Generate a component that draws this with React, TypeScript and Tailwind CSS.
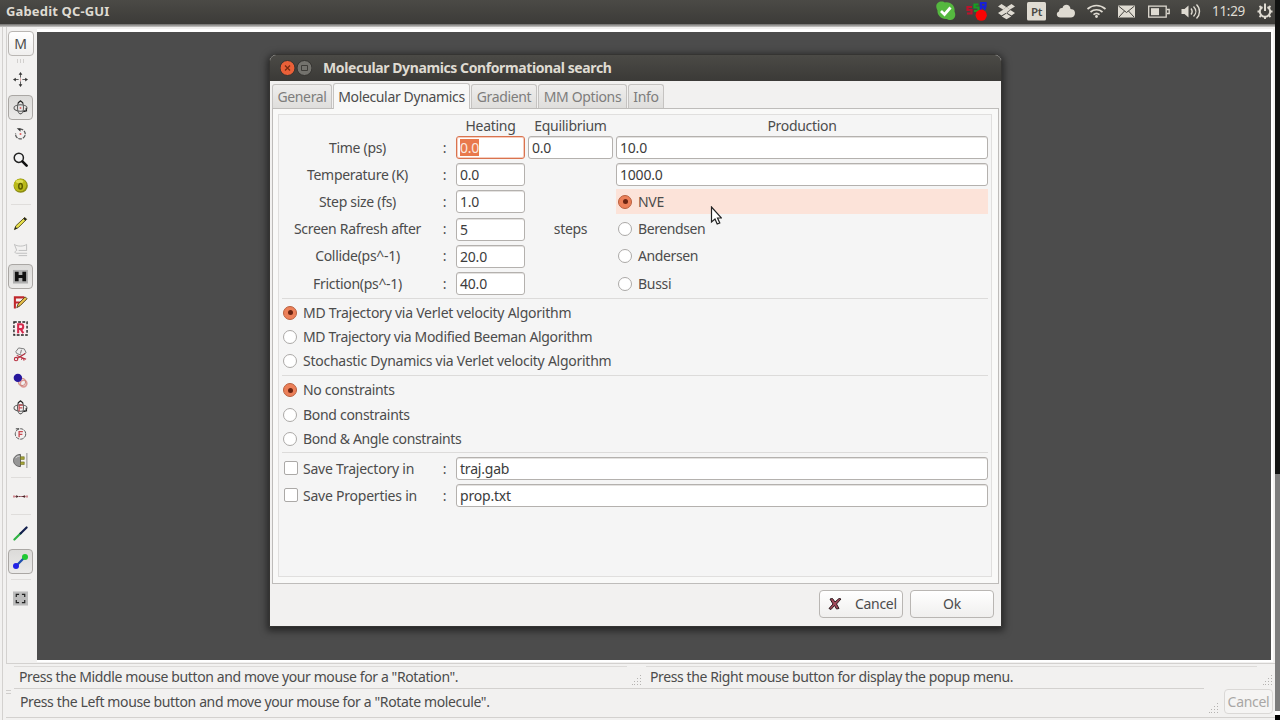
import type { ReactNode } from 'react'
import clsx from 'clsx'

type ToolItem = {
  id: string
  box: string
  pressed?: boolean
  icon: ReactNode
}

const Orbit = () => (
  <g fill="none" stroke="#5a5a5a" strokeWidth="1.1">
    <ellipse cx="8" cy="8.5" rx="7" ry="3.4" />
    <ellipse cx="8" cy="8" rx="3.2" ry="6.8" />
    <path d="M5 3.7 8 1l3 2.7M11 12.5l3.5-1-.6-3" stroke="#222" />
  </g>
)

const tools: ToolItem[] = [
  {
    id: 'move',
    box: 'h-[26px]',
    icon: (
      <g stroke="#555" fill="#333" strokeWidth="1">
        <path d="M8 2v4M8 10v4M2 8h4M10 8h4" />
        <path stroke="none" d="M8 0l2 3H6zM8 16l2-3H6zM0 8l3-2v4zM16 8l-3-2v4z" />
        <path d="M8 6.5v3" stroke="#d9a0a0" />
      </g>
    ),
  },
  {
    id: 'rotate-molecule',
    box: 'mt-[2px] h-[26px]',
    pressed: true,
    icon: (
      <>
        <Orbit />
        <circle cx="8" cy="8.5" r="1" fill="#e06060" />
      </>
    ),
  },
  {
    id: 'rotate-z',
    box: 'h-[26px]',
    icon: (
      <>
        <path d="M7 3.5a5.2 5.2 0 1 1-4.2 4" fill="none" stroke="#555" strokeWidth="1.3" strokeDasharray="4 1" />
        <path d="M4 2.5h4v3.5z" fill="#333" />
        <circle cx="8" cy="8.5" r="1.1" fill="#e06060" />
      </>
    ),
  },
  {
    id: 'zoom',
    box: 'h-[26px]',
    icon: (
      <>
        <circle cx="6.2" cy="6.2" r="4.9" fill="#f3f3f3" stroke="#222" strokeWidth="1.6" />
        <path d="M10 10l4.5 4.5" stroke="#111" strokeWidth="2.8" strokeLinecap="round" />
      </>
    ),
  },
  {
    id: 'zero',
    box: 'h-[27px]',
    icon: (
      <>
        <circle cx="8.2" cy="8.2" r="7.6" fill="#8b8b12" />
        <circle cx="7.6" cy="7.4" r="6.7" fill="#b9b91a" />
        <ellipse cx="7" cy="3.6" rx="4" ry="1.8" fill="#dede55" />
        <ellipse cx="8" cy="8.8" rx="1.9" ry="3" fill="none" stroke="#5d5d00" strokeWidth="1.6" />
      </>
    ),
  },
  { id: 'sep-1', box: 'h-[11px]', icon: null },
  {
    id: 'edit',
    box: 'h-[26px]',
    icon: (
      <>
        <path d="M1.5 14.5l1.5-4L12.5 1.5l2 2-9 9z" fill="#e8e04a" stroke="#55501e" />
        <path d="M1.5 14.5l1.2-3 1.8 1.8zM12.5 1.5l2 2-1.5 1.5-2-2z" fill="#222" />
      </>
    ),
  },
  {
    id: 'bonds',
    box: 'h-[26px]',
    icon: (
      <path
        d="M1.5 2.5c3 2.5 10 2.5 13 0v6M1.5 2.5L4 9M4 9c-2.5 1-2.5 3 0 3h11M6 9h9M6 14.5h9"
        fill="none"
        stroke="#bdbdbd"
      />
    ),
  },
  {
    id: 'hydrogen',
    box: 'mt-px h-[26px]',
    pressed: true,
    icon: (
      <>
        <path d="M0 1h16v14.5H0z" fill="#b0b0b0" />
        <path d="M2 3h4v3.5h4V3h4v10h-4V9.500H6V13H2z" fill="#111" />
      </>
    ),
  },
  {
    id: 'edit-fragment',
    box: 'h-[26px]',
    icon: (
      <>
        <path d="M2 14.5V2.5H12M2.5 8H8" fill="none" stroke="#c0282c" strokeWidth="2.2" />
        <path d="M4 13.5l1.5-4L13 2l2 2-7.5 7.5z" fill="#e8c24a" stroke="#55401e" />
      </>
    ),
  },
  {
    id: 'select-residue',
    box: 'h-[26px]',
    icon: (
      <>
        <rect x="1" y="1" width="14" height="14" fill="#fbeef0" stroke="#222" strokeWidth="1.5" strokeDasharray="3 1.5" />
        <path d="M5.5 13V3.5h3c3.2 0 3.2 5 0 5h-3M8 8.5l3 4.5" fill="none" stroke="#d42a4c" strokeWidth="2.2" />
      </>
    ),
  },
  {
    id: 'cut',
    box: 'h-[26px]',
    icon: (
      <>
        <path d="M3 5l3-4 6 1 2 4-4 3-6-2zM9 3l-1 4" fill="#eee" stroke="#777" />
        <path
          d="M1.5 13c0-2.500 3.500-2.500 3.500 0s-3.500 2-3.500 0M5 12l8-5M9 13.500c0-2.500 3.500-1.500 2.500 1M4 9l10 4"
          fill="none"
          stroke="#b83040"
          strokeWidth="1.2"
        />
      </>
    ),
  },
  {
    id: 'atoms',
    box: 'h-[27px]',
    icon: (
      <>
        <circle cx="11.2" cy="11.2" r="3.5" fill="none" stroke="#dd9a96" strokeWidth="1.8" />
        <circle cx="9.5" cy="9.5" r="4" fill="none" stroke="#c98078" />
        <circle cx="5.2" cy="5.2" r="4.5" fill="#27179c" />
      </>
    ),
  },
  {
    id: 'rotate-fragment',
    box: 'h-[26px]',
    icon: (
      <>
        <Orbit />
        <path d="M6.5 12V5.5H10.5M6.5 8.5h3.5" fill="none" stroke="#c74a50" strokeWidth="1.3" />
      </>
    ),
  },
  {
    id: 'rotate-fragment-z',
    box: 'h-[26px]',
    icon: (
      <>
        <circle cx="8" cy="8.5" r="5.6" fill="none" stroke="#555" strokeDasharray="4 1" />
        <path d="M3 3h3.5" stroke="#333" />
        <path d="M6.5 12V6H10.5M6.5 9h3.5" fill="none" stroke="#c74a50" strokeWidth="1.4" />
      </>
    ),
  },
  {
    id: 'plug',
    box: 'mt-px h-[26px]',
    icon: (
      <>
        <path d="M8 1.5C3 1.5.5 5 .5 8s2.5 6.5 7.5 6.5z" fill="#969696" stroke="#5e5e5e" />
        <path d="M3 5.5c1-1.5 2-2 4-2" stroke="#ddd" fill="none" />
        <path d="M8 4h4v2.8H8zM8 9.5h4v2.8H8z" fill="#a6a638" stroke="#66661c" strokeWidth=".6" />
        <path d="M14.8 0v16" stroke="#8a8a8a" />
      </>
    ),
  },
  { id: 'sep-2', box: 'h-[9px]', icon: null },
  {
    id: 'distance',
    box: 'mt-px h-[26px]',
    icon: (
      <>
        <path d="M1 8h14" stroke="#7b3040" strokeDasharray="2 .6" />
        <path d="M0 7h2.500v2H0zM13.500 7H16v2h-2.500z" fill="#d08a90" />
        <path d="M6 8L3.500 6.500v3zM10 8l2.500-1.500v3z" fill="#442222" />
      </>
    ),
  },
  { id: 'sep-3', box: 'h-[11px]', icon: null },
  {
    id: 'stick',
    box: 'h-[26px]',
    icon: (
      <>
        <path d="M1.5 14.5L8.5 7.5" stroke="#2fb344" strokeWidth="2.3" strokeLinecap="round" />
        <path d="M8 8l6.5-6.5" stroke="#14204e" strokeWidth="2.3" strokeLinecap="round" />
      </>
    ),
  },
  {
    id: 'ball-stick',
    box: 'mt-[2px] h-[26px]',
    pressed: true,
    icon: (
      <>
        <path d="M3.5 12.5l9-9" stroke="#1f4fae" strokeWidth="2.4" />
        <circle cx="3.2" cy="12.8" r="3.2" fill="#2222e6" />
        <circle cx="12.8" cy="3.2" r="3.2" fill="#1ec832" />
      </>
    ),
  },
  { id: 'sep-4', box: 'h-[10px]', icon: null },
  {
    id: 'fullscreen',
    box: 'mt-px h-[26px]',
    icon: (
      <>
        <path d="M0 .5h16v15H0z" fill="#bcbcbc" />
        <path d="M3.5 6.500v-3h3M9.500 3.500h3v3M12.500 9.500v3h-3M6.500 12.500h-3v-3" fill="none" stroke="#222" strokeWidth="1.3" />
      </>
    ),
  },
]

const raised = 'border border-[#b9b6b3] bg-gradient-to-b from-white to-[#f0efee] rounded-[4px]'

const Toolbar = () => (
  <div className="flex w-[27px] flex-col items-center pt-[4px]">
    <div className={clsx(raised, 'flex h-[25px] w-[26px] items-center justify-center text-[14px]')}>M</div>
    <div className="flex h-[10px] items-center gap-[2px]">
      <i className="h-1 w-px bg-[#d2d0ce]" />
      <i className="h-1 w-px bg-[#d2d0ce]" />
      <i className="h-1 w-px bg-[#d2d0ce]" />
    </div>
    {tools.map((tool) => (
      <div key={tool.id} className={clsx('flex w-full shrink-0 items-center justify-center', tool.box)}>
        {tool.icon ? (
          <div
            className={clsx(
              'flex size-[25px] items-center justify-center',
              tool.pressed && 'rounded-[4px] border border-[#aaa7a4] bg-gradient-to-b from-[#dcdbd9] to-[#ebeae9]',
            )}
          >
            <svg viewBox="0 0 16 16" className="size-[15px] shrink-0">
              {tool.icon}
            </svg>
          </div>
        ) : (
          <div className="h-px w-5 bg-[#dfdddb]" />
        )}
      </div>
    ))}
  </div>
)

const TopBar = () => (
  <header className="flex h-[24px] shrink-0 items-center justify-between bg-gradient-to-b from-[#4b4a46] to-[#3c3b38] pl-[6px] text-[#dfdbd2]">
    <span className="pb-[2px] text-[13px] font-bold tracking-[0.15px]">Gabedit QC-GUI</span>
    <svg viewBox="0 0 340 24" className="h-[24px] w-[340px]">
      <path
        d="M3 2.5c3-1 5 0 6 .5 6-1 10.5 4 9.5 9 2 4 0 8.5-4 8.5-2 0-3-.5-4-1-5 .5-9.5-4-9-8.500C-.5 7 0 4 3 2.5z"
        transform="translate(1 -.5)"
        fill="#55b83f"
      />
      <path d="M6 11l3.5 3.500L15.500 7.500" fill="none" stroke="#fff" strokeWidth="2.8" />
      <g transform="translate(5 0)">
        <g fill="none" strokeWidth="2.2">
          <path d="M32 7h-4.500v3H31.500v3.500h-4.500" stroke="#b9142c" />
          <path d="M38.500 4.500H34.500v3h4V11h-4.500" stroke="#16a022" />
          <path d="M41 10V3h4.500v3.500h-4M43 6.500l2.500 3" stroke="#1820d8" />
        </g>
        <circle cx="41.200" cy="15.200" r="5.600" fill="#fa0404" />
        <path
          d="M61.500 4l4.700 2.900-3.200 2.700L58 6.600zM71.500 4l-4.700 2.900 3.200 2.700 5-3zM58 13l5-3.300 3.500 2.900-5 3zM75 13l-5-3.300-3.500 2.900 5 3zM61.800 16.500l4.700-3 4.700 3-4.700 2.800zM62.500 10l4-3 4 3-4 3.500z"
          fill="#dfdbd2"
        />
        <rect x="87" y="2" width="19" height="18.500" rx="1.500" fill="#dfdbd2" />
        <text x="96.500" y="15.500" textAnchor="middle" fontSize="11.500" fontWeight="600" fill="#4a4944">Pt</text>
        <path
          d="M121.500 17.500c-4.300 0-4.800-5-1.500-6 0-3 2-4 3.500-3.500 1-5 8-4 8 1 4 0 5 3 4.300 5.500-.5 2-2 3-3.800 3z"
          transform="translate(-1 0)"
          fill="#dfdbd2"
        />
        <g fill="none" stroke="#dfdbd2" strokeWidth="1.7">
          <path d="M147.500 9c5.500-4.700 12.500-4.700 18 0M150.500 12c3.500-3 8.500-3 12 0M153.500 14.700c2-1.700 4-1.700 6 0" />
        </g>
        <circle cx="156.500" cy="16.500" r="1.400" fill="#dfdbd2" />
        <rect x="178" y="5.500" width="17" height="12" fill="#dfdbd2" />
        <path d="M178.500 6l8 6.500 8-6.500M179 17l5.500-6M194 17l-5.500-6" fill="none" stroke="#45443f" />
        <path d="M208.700 6.200h17.500v11h-17.500zM227 9.500h2.200v4H227" fill="none" stroke="#dfdbd2" strokeWidth="1.3" />
        <path d="M211 8.200h8v7h-8z" fill="#dfdbd2" />
        <path d="M241.500 9h3l4-3.500v12l-4-3.500h-3z" fill="#dfdbd2" />
        <path d="M251 8.500c1.500 2 1.500 4 0 6M253.500 6.500c3 3 3 7 0 10M256.500 4.500c4 4 4 10 0 14" fill="none" stroke="#dfdbd2" strokeWidth="1.4" />
        <text x="272" y="16" fontSize="13.500" textLength="33" fill="#dfdbd2">11:29</text>
        <g fill="none" stroke="#dfdbd2">
          <path d="M322.500 7a5.200 5.200 0 1 0 5 0" strokeWidth="2" />
          <path d="M325 3.500v7.500" strokeWidth="2" />
          <path
            d="M317.500 11.500h2.500M330 11.500h2.500M319.500 6l1.800 1.800M330.500 6l-1.800 1.800M319.500 17l1.800-1.800M330.500 17l-1.800-1.800M325 16.500V19"
            strokeWidth="1.9"
          />
        </g>
      </g>
    </svg>
  </header>
)

const Entry = ({ value, selected = false }: { value: string; selected?: boolean }) => (
  <div
    className={clsx(
      'flex h-[23px] w-full items-center rounded-[3px] border bg-white px-[3px] text-[#3c3c3c]',
      selected ? 'border-[#d9734f] shadow-[inset_0_0_0_1px_#f6cdbd]' : 'border-[#b4b1ae] shadow-[inset_0_1px_0_#e4e2e0]',
    )}
  >
    <span className={clsx('leading-[17px] tracking-[-0.2px]', selected && 'bg-[#e9794c] text-[#fbe8df]')}>{value}</span>
  </div>
)

const Radio = ({ label, checked = false, className }: { label: string; checked?: boolean; className?: string }) => (
  <div className={clsx('flex items-center gap-[6px]', className)}>
    <span
      className={clsx(
        'flex size-[14px] shrink-0 items-center justify-center rounded-full border',
        checked ? 'border-[#b9603f] bg-[#ec8059]' : 'border-[#aba9a7] bg-white',
      )}
    >
      {checked && <span className="size-[5px] rounded-full bg-[#6b2412]" />}
    </span>
    <span className="whitespace-nowrap">{label}</span>
  </div>
)

const Checkbox = ({ label }: { label: string }) => (
  <div className="flex items-center gap-[5px] pl-[2px]">
    <span className="mb-px size-[14px] shrink-0 rounded-[2px] border border-[#aba9a7] bg-white" />
    <span className="tracking-[-0.23px] whitespace-nowrap">{label}</span>
  </div>
)

const Rule = () => <div className="h-px shrink-0 bg-[#dcdbda]" />

const rows = [
  { label: 'Time (ps)', heating: '0.0' },
  { label: 'Temperature (K)', heating: '0.0' },
  { label: 'Step size (fs)', heating: '1.0' },
  { label: 'Screen Rafresh after', heating: '5' },
  { label: 'Collide(ps^-1)', heating: '20.0' },
  { label: 'Friction(ps^-1)', heating: '40.0' },
]

const middle: ReactNode[] = [<Entry value="0.0" />, null, null, 'steps', null, null]

const production: ReactNode[] = [
  <Entry value="10.0" />,
  <Entry value="1000.0" />,
  <Radio label="NVE" checked className="h-[25px] w-full bg-[#fce3d9] pl-[2px]" />,
  <Radio label="Berendsen" className="w-full pl-[2px] tracking-[-0.4px]" />,
  <Radio label="Andersen" className="w-full pl-[2px] tracking-[-0.4px]" />,
  <Radio label="Bussi" className="w-full pl-[2px]" />,
]

const cols = 'grid grid-cols-[151px_17px_69px_85px_372px] gap-x-[3px] items-center justify-items-center'

const tabs = [
  { label: 'General', width: 'w-[60px]' },
  { label: 'Molecular Dynamics', width: 'w-[137px]', active: true },
  { label: 'Gradient', width: 'w-[66px]' },
  { label: 'MM Options', width: 'w-[89px]' },
  { label: 'Info', width: 'w-[36px]' },
]

const Dialog = () => (
  <div className="absolute top-[54px] left-[269px] flex h-[573px] w-[733px] flex-col rounded-t-[7px] border border-[#353432] bg-[#f2f1f0] shadow-[0_2px_7px_2px_rgba(0,0,0,0.5)]">
    <div className="flex h-[26px] shrink-0 items-center rounded-t-[6px] bg-gradient-to-b from-[#4b4a46] to-[#3b3a37] pl-[10px] text-[#dfdbd2]">
      <svg viewBox="0 0 32 16" className="h-[16px] w-[32px]">
        <circle cx="7.5" cy="8" r="7.5" fill="#ea6038" stroke="#33322f" />
        <path d="M5 5.5l5 5M10 5.500l-5 5" stroke="#7c2b10" strokeWidth="1.3" />
        <circle cx="24.5" cy="8" r="7.5" fill="#73726d" stroke="#33322f" />
        <path d="M21.500 5.500h6v5h-6z" fill="none" stroke="#3e3d39" />
      </svg>
      <span className="ml-[11px] pb-px text-[14px] font-bold tracking-[-0.4px]">Molecular Dynamics Conformational search</span>
    </div>

    <div className="flex h-[27px] shrink-0 items-end gap-px px-[2px]">
      {tabs.map((tab) => (
        <div
          key={tab.label}
          className={clsx(
            'z-10 flex items-center justify-center rounded-t-[3px] border border-[#c5c3c1] tracking-[-0.35px] whitespace-nowrap',
            tab.width,
            tab.active
              ? '-mb-px h-[26px] border-b-0 bg-[#f8f8f7]'
              : 'h-[24px] border-b-0 bg-gradient-to-b from-[#efeeed] to-[#dfdedc] pt-px text-[#7e7d7c]',
          )}
        >
          {tab.label}
        </div>
      ))}
    </div>

    <div className="ml-[2px] flex h-[476px] w-[727px] shrink-0 border border-[#bebcba] bg-[#f9f9f8] pt-[5px] pr-[6px] pb-[6px] pl-[5px]">
      <div className="flex grow flex-col border border-[#e0dfde] bg-[#f5f5f5] px-[3px]">
        <div className={clsx(cols, 'h-[19px] pt-[2px]')}>
          <span />
          <span />
          <span>Heating</span>
          <span>Equilibrium</span>
          <span>Production</span>
        </div>
        {rows.map((row, i) => (
          <div key={row.label} className={clsx(cols, 'h-[27.2px]')}>
            <span>{row.label}</span>
            <span>:</span>
            <Entry value={row.heating} selected={i === 0} />
            <div className="flex w-full justify-center">{middle[i]}</div>
            {production[i]}
          </div>
        ))}

        <div className="mt-px shrink-0">
          <Rule />
        </div>
        <div className="flex h-[76px] flex-col pt-[1.5px] pl-px">
          <Radio className="h-[24.3px] tracking-[-0.24px]" label="MD Trajectory via Verlet velocity Algorithm" checked />
          <Radio className="h-[24.3px] tracking-[-0.33px]" label="MD Trajectory via Modified Beeman Algorithm" />
          <Radio className="h-[24.3px] tracking-[-0.26px]" label="Stochastic Dynamics via Verlet velocity Algorithm" />
        </div>
        <Rule />
        <div className="flex h-[76px] flex-col pt-[2px] pl-px">
          <Radio className="h-[24.3px]" label="No constraints" checked />
          <Radio className="h-[24.3px]" label="Bond constraints" />
          <Radio className="h-[24.3px] tracking-[-0.35px]" label="Bond & Angle constraints" />
        </div>
        <Rule />
        <div className="flex flex-col pt-[2px]">
          {[
            ['Save Trajectory in', 'traj.gab'],
            ['Save Properties in', 'prop.txt'],
          ].map(([label, value]) => (
            <div key={label} className="grid h-[27.2px] grid-cols-[151px_17px_532px] items-center gap-x-[3px]">
              <Checkbox label={label} />
              <span className="text-center">:</span>
              <Entry value={value} />
            </div>
          ))}
        </div>
      </div>
    </div>

    <div className="flex grow items-center justify-end gap-[7px] pr-[7px] pb-[2px]">
      <button type="button" className={clsx(raised, 'flex h-[28px] w-[84px] items-center pl-[8px]')}>
        <svg viewBox="0 0 14 14" className="size-[14px]">
          <path d="M2 2l2.5-.5L7 5l4-3.500 2 .5L8.500 7l2.500 4.500-2.500.5-2-3.500-3.500 4-2-1L5 7z" fill="#a34a5c" stroke="#2c1a1e" />
        </svg>
        <span className="ml-[13px]">Cancel</span>
      </button>
      <button type="button" className={clsx(raised, 'h-[28px] w-[84px]')}>
        Ok
      </button>
    </div>
  </div>
)

const ResizeGrip = () => (
  <svg viewBox="0 0 10 10" className="size-[10px] shrink-0" fill="#b5b3b1">
    <path d="M8 0h1v1H8zM5 3h1v1H5zM8 3h1v1H8zM2 6h1v1H2zM5 6h1v1H5zM8 6h1v1H8zM0 9h1v1H0zM2 9h1v1H2zM5 9h1v1H5zM8 9h1v1H8z" />
  </svg>
)

const StatusBars = () => (
  <footer className="flex h-[57px] shrink-0 flex-col border-t border-[#d3d1cf]">
    <div className="flex h-[24px] items-end">
      <div className="ml-[8px] flex h-[22px] w-[613px] items-center border-t border-[#dddbd9] pb-[2px] pl-[5px] tracking-[-0.39px] whitespace-nowrap">
        Press the Middle mouse button and move your mouse for a "Rotation".
      </div>
      <div className="mb-[3px] ml-[5px]">
        <ResizeGrip />
      </div>
      <div className="ml-[4px] flex h-[22px] w-[611px] items-center border-t border-[#dddbd9] pb-[2px] pl-[4px] tracking-[-0.4px] whitespace-nowrap">
        Press the Right mouse button for display the popup menu.
      </div>
      <div className="mb-[3px] ml-[6px]">
        <ResizeGrip />
      </div>
    </div>
    <div className="flex h-[30px] items-start border-b border-[#d3d1cf]">
      <div className="mt-[2px] flex w-[8px] flex-col gap-[2px]">
        <i className="h-px w-[5px] bg-[#cfcdcb]" />
        <i className="h-px w-[5px] bg-[#cfcdcb]" />
      </div>
      <div className="flex h-[28px] w-[1190px] items-center border-t border-[#d3d1cf] pb-[2px] pl-[6px] tracking-[-0.37px] whitespace-nowrap">
        Press the Left mouse button and move your mouse for a "Rotate molecule".
      </div>
      <div className="mt-[15px] ml-[5px]">
        <ResizeGrip />
      </div>
      <button
        type="button"
        className="mt-[1px] ml-[5px] h-[25px] w-[49px] rounded-[4px] border border-[#dad8d6] bg-[#f5f4f3] text-[#a9a7a5]"
      >
        Cancel
      </button>
    </div>
  </footer>
)

const App = () => (
  <div className="relative flex h-[720px] w-[1280px] overflow-hidden bg-[#f2f1f0] font-['Noto_Sans','Open_Sans',sans-serif] text-[14px] leading-none tracking-[-0.3px] text-[#4c4c4c]">
    <div className="flex w-[1275px] shrink-0 flex-col">
      <TopBar />
      <div className="h-[3px] shrink-0 bg-gradient-to-b from-[#6e6d6b] to-[#c9c8c6]" />
      <div className="flex grow">
        <div className="w-[3px] border-r border-[#d3d1cf]" />
        <div className="flex w-[1272px] flex-col pl-[3px]">
          <div className="flex h-[636px] border-l border-[#d3d1cf]">
            <Toolbar />
            <div className="mt-[2px] mb-[1px] ml-[3px] w-[1236px] border-t-[3px] border-r-[2px] border-b-[2px] border-white bg-[#4c4c4c]" />
          </div>
          <StatusBars />
        </div>
      </div>
    </div>
    <div className="flex grow flex-col bg-black">
      <div className="h-[474px] bg-[#111211]" />
      <div className="h-[237px] bg-[#7c7c7c]" />
      <div className="h-[4px] bg-white" />
    </div>

    <Dialog />

    {/* mouse pointer */}
    <svg viewBox="0 0 12 19" className="absolute top-[206px] left-[710px] z-20 h-[19px] w-[12px]">
      <path d="M1.5 1v15l3.500-3 2.200 5 2.600-1-2.300-5h4z" fill="#fff" stroke="#222" strokeWidth="1.2" />
    </svg>
  </div>
)

export default App
